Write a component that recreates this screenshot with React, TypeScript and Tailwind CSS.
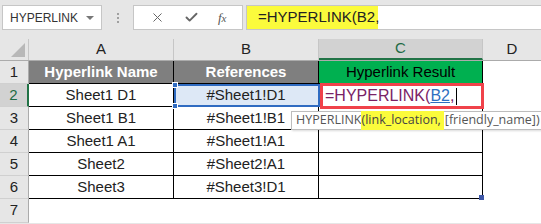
import { X, Check } from "lucide-react";

// ─── Data ─────────────────────────────────────────────────────────────────────
const rows = [
  { name: "Sheet1 D1", ref: "#Sheet1!D1" },
  { name: "Sheet1 B1", ref: "#Sheet1!B1" },
  { name: "Sheet1 A1", ref: "#Sheet1!A1" },
  { name: "Sheet2", ref: "#Sheet2!A1" },
  { name: "Sheet3", ref: "#Sheet3!D1" },
];

const cellFont = { fontFamily: '"Liberation Sans", Arial, sans-serif' };

// ─── Component ────────────────────────────────────────────────────────────────
export default function App() {
  return (
    <div
      className="w-[541px] h-[224px] overflow-hidden bg-[#e6e6e6] text-[#222]"
      style={cellFont}
    >
      {/* ── Formula bar ── */}
      <div className="h-[39px] flex items-start pt-[5px] pl-[2px] gap-0">
        <div className="w-[100px] h-[25px] bg-white border border-[#c6c6c6] flex items-center pl-[7px] pr-[7px]">
          <span className="text-[12px] text-[#333]">HYPERLINK</span>
          <span className="ml-auto w-0 h-0 border-l-[4px] border-r-[4px] border-t-[4px] border-l-transparent border-r-transparent border-t-[#777]" />
        </div>
        <div className="w-[31px] h-[25px] flex flex-col items-center justify-center gap-[2px]">
          <span className="w-[2px] h-[2px] bg-[#a0a0a0]" />
          <span className="w-[2px] h-[2px] bg-[#a0a0a0]" />
          <span className="w-[2px] h-[2px] bg-[#a0a0a0]" />
        </div>
        <div className="w-[110px] h-[25px] bg-white border border-[#c6c6c6] flex items-center justify-around px-[6px]">
          <X className="w-[15px] h-[15px] text-[#666]" strokeWidth={1.6} />
          <Check className="w-[15px] h-[15px] text-[#666]" strokeWidth={3} />
          <span
            className="text-[13px] italic text-[#555]"
            style={{ fontFamily: '"Liberation Serif", serif' }}
          >
            f<span className="text-[11px]">x</span>
          </span>
        </div>
        <div className="ml-[3px] flex-1 h-[25px] bg-white border border-[#c6c6c6] border-r-0 flex items-center">
          <div className="h-full w-[131px] bg-[#fbfb3c] flex items-center pl-[11px] text-[15px] text-[#222]">
            =HYPERLINK(B2,
          </div>
        </div>
      </div>

      {/* ── Grid ── */}
      <div className="relative">
        {/* Column headers */}
        <div className="flex h-[22px] border-b border-[#ababab] text-[15px]">
          <div className="w-[29px] relative border-r border-[#c6c6c6]">
            <span
              className="absolute right-[3px] bottom-[3px] w-0 h-0"
              style={{ borderBottom: "14px solid #b8b8b8", borderLeft: "14px solid transparent" }}
            />
          </div>
          <div className="w-[145px] flex items-center justify-center border-r border-[#c6c6c6]">A</div>
          <div className="w-[145px] flex items-center justify-center border-r border-[#c6c6c6]">B</div>
          <div className="w-[164px] flex items-center justify-center bg-[#d2d2d2] text-[#1e6b44] border-r border-[#c6c6c6] border-b-2 border-b-[#217346]">C</div>
          <div className="flex-1 flex items-center justify-center">D</div>
        </div>

        {/* Header row 1 */}
        <div className="flex h-[23px] text-[15px]">
          <RowNum n={1} />
          <div className="w-[145px] bg-[#7f7f7f] text-white font-bold flex items-center justify-center border-r border-b border-black">
            Hyperlink Name
          </div>
          <div className="w-[145px] bg-[#7f7f7f] text-white font-bold flex items-center justify-center border-r border-b border-black">
            References
          </div>
          <div className="w-[164px] bg-[#00b050] text-black flex items-center justify-center border-r border-b border-black">
            Hyperlink Result
          </div>
          <div className="flex-1 bg-white" />
        </div>

        {rows.map((r, i) => (
          <div key={r.name} className="flex h-[23px] text-[15px]">
            <RowNum n={i + 2} active={i === 0} />
            <div className="w-[145px] bg-white flex items-center justify-center border-r border-b border-black">
              {r.name}
            </div>
            <div
              className={`w-[145px] flex items-center justify-center border-r border-b border-black ${
                i === 0 ? "bg-[#dde8f6]" : "bg-white"
              }`}
            >
              {r.ref}
            </div>
            <div className="w-[164px] bg-white border-r border-b border-black relative">
              {i === 4 && (
                <span className="absolute right-[-2px] bottom-[-2px] w-[5px] h-[5px] bg-[#3f58a8]" />
              )}
            </div>
            <div className="flex-1 bg-white" />
          </div>
        ))}

        {/* Row 7 */}
        <div className="flex h-[24px] text-[15px]">
          <RowNum n={7} />
          <div className="flex-1 bg-white" />
        </div>

        {/* Selection on B2 */}
        <div className="absolute left-[174px] top-[45px] w-[146px] h-[23px] border-2 border-[#2f6bc1] pointer-events-none">
          <span className="absolute left-[-4px] top-[-4px] w-[6px] h-[6px] bg-[#2f6bc1] border border-white" />
          <span className="absolute left-[-4px] bottom-[-4px] w-[6px] h-[6px] bg-[#2f6bc1] border border-white" />
        </div>

        {/* Editing C2 */}
        <div className="absolute left-[320px] top-[44px] w-[164px] h-[26px] border-[3px] border-[#f0424a] bg-white flex items-center pl-[2px] text-[16px] text-[#7a2266]">
          =HYPERLINK(
          <span className="text-[#2e6fc0] underline decoration-[#2e6fc0]">B2</span>,
          <span className="w-px h-[17px] bg-black ml-[2px]" />
        </div>

        {/* Tooltip */}
        <div
          className="absolute left-[291px] top-[72px] h-[19px] bg-white border border-[#bdbdbd] flex items-center px-[4px] text-[12.5px] text-[#555] shadow-[1px_1px_2px_rgba(0,0,0,0.15)]"
          style={{ fontFamily: '"Open Sans", "Liberation Sans", sans-serif' }}
        >
          HYPERLINK
          <span className="bg-[#fbfb3c] text-[#444] pr-[3px]">(link_location,</span>
          <span className="ml-[1px]">[friendly_name])</span>
        </div>
      </div>
    </div>
  );
}

function RowNum({ n, active }: { n: number; active?: boolean }) {
  return (
    <div
      className={`w-[29px] flex items-center justify-center border-b border-[#d0d0d0] ${
        active
          ? "bg-[#d2d2d2] text-[#1e6b44] border-r-2 border-r-[#217346]"
          : "bg-[#e6e6e6] border-r border-r-[#ababab]"
      }`}
    >
      {n}
    </div>
  );
}
